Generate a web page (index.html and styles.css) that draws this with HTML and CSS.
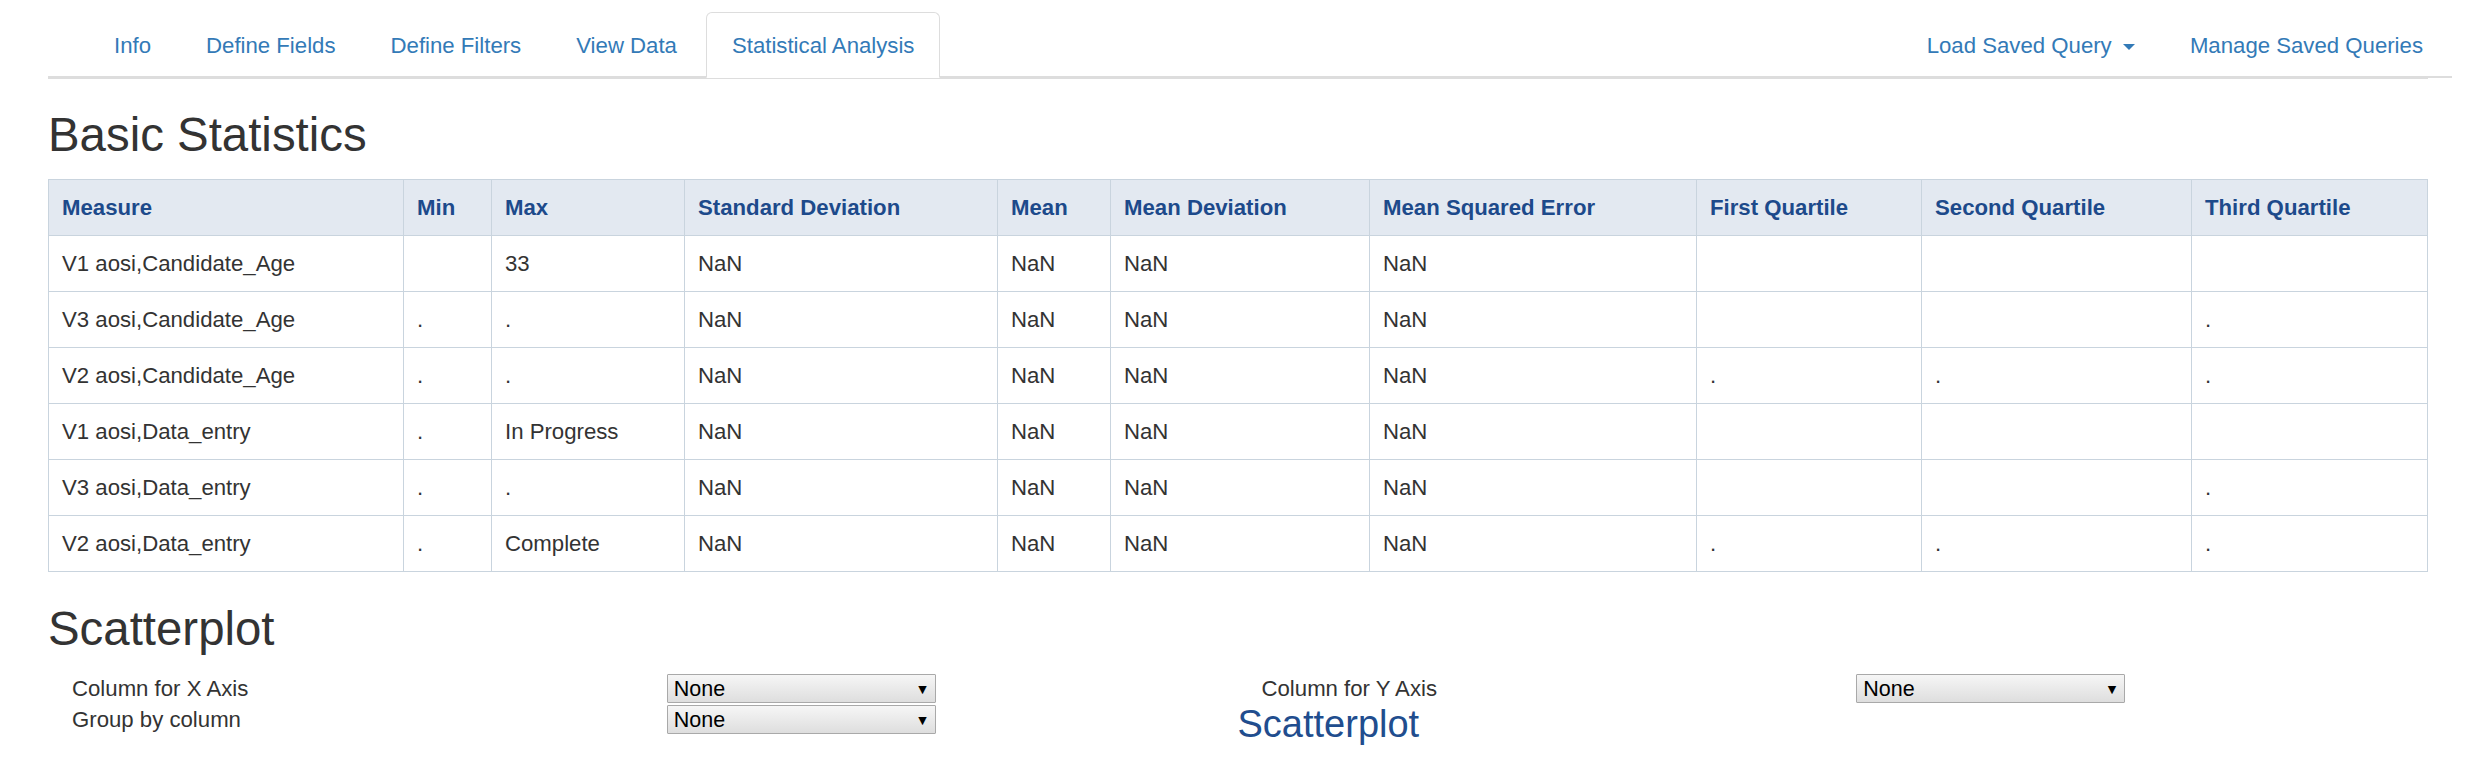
FILE: index.html
```html
<!DOCTYPE html>
<html lang="en">
<head>
<meta charset="utf-8">
<title>Statistical Analysis</title>
<link rel="stylesheet" href="styles.css">
</head>
<body>
<div class="page">
  <nav class="topnav">
    <ul class="tabs tabs-left">
      <li><a href="#">Info</a></li>
      <li><a href="#">Define Fields</a></li>
      <li><a href="#">Define Filters</a></li>
      <li><a href="#">View Data</a></li>
      <li class="active"><a href="#">Statistical Analysis</a></li>
    </ul>
    <ul class="tabs tabs-right">
      <li><a href="#">Load Saved Query <span class="caret"></span></a></li>
      <li><a href="#">Manage Saved Queries</a></li>
    </ul>
  </nav>

  <h2 class="section-title stats-title">Basic Statistics</h2>

  <table class="stats">
    <colgroup>
      <col class="w1"><col class="w2"><col class="w3"><col class="w4"><col class="w5">
      <col class="w6"><col class="w7"><col class="w8"><col class="w9"><col class="w10">
    </colgroup>
    <thead>
      <tr>
        <th>Measure</th><th>Min</th><th>Max</th><th>Standard Deviation</th><th>Mean</th>
        <th>Mean Deviation</th><th>Mean Squared Error</th><th>First Quartile</th><th>Second Quartile</th><th>Third Quartile</th>
      </tr>
    </thead>
    <tbody>
      <tr><td>V1 aosi,Candidate_Age</td><td></td><td>33</td><td>NaN</td><td>NaN</td><td>NaN</td><td>NaN</td><td></td><td></td><td></td></tr>
      <tr><td>V3 aosi,Candidate_Age</td><td>.</td><td>.</td><td>NaN</td><td>NaN</td><td>NaN</td><td>NaN</td><td></td><td></td><td>.</td></tr>
      <tr><td>V2 aosi,Candidate_Age</td><td>.</td><td>.</td><td>NaN</td><td>NaN</td><td>NaN</td><td>NaN</td><td>.</td><td>.</td><td>.</td></tr>
      <tr><td>V1 aosi,Data_entry</td><td>.</td><td>In Progress</td><td>NaN</td><td>NaN</td><td>NaN</td><td>NaN</td><td></td><td></td><td></td></tr>
      <tr><td>V3 aosi,Data_entry</td><td>.</td><td>.</td><td>NaN</td><td>NaN</td><td>NaN</td><td>NaN</td><td></td><td></td><td>.</td></tr>
      <tr><td>V2 aosi,Data_entry</td><td>.</td><td>Complete</td><td>NaN</td><td>NaN</td><td>NaN</td><td>NaN</td><td>.</td><td>.</td><td>.</td></tr>
    </tbody>
  </table>

  <h2 class="section-title scatter-title">Scatterplot</h2>

  <div class="scatter-form">
    <div class="cell label">Column for X Axis</div>
    <div class="cell"><span class="sel"><select><option>None</option></select></span></div>
    <div class="cell label">Column for Y Axis</div>
    <div class="cell"><span class="sel"><select><option>None</option></select></span></div>

    <div class="cell label">Group by column</div>
    <div class="cell"><span class="sel"><select><option>None</option></select></span></div>
    <h3 class="plot-title">Scatterplot</h3>
    <div class="cell"></div>
  </div>
</div>
</body>
</html>
```

FILE: styles.css
```css
html, body {
  margin: 0;
  background: #ffffff;
}

body {
  font-family: "Liberation Sans", Arial, sans-serif;
  font-size: 22.2px;
  color: #333333;
}

.page {
  padding: 0 53px 30px 48px;
}

/* ---------- top navigation ---------- */
.topnav {
  display: flex;
  align-items: flex-start;
  padding-top: 12px;
  margin-right: -1px;
  border-bottom: 1px solid #dddddd;
}

.tabs {
  list-style: none;
  margin: 0;
  padding: 0;
  display: flex;
  align-items: flex-start;
  height: 64px;
  border-bottom: 2px solid #dddddd;
}

.tabs-left {
  flex: 1;
  padding-left: 40px;
}

.tabs-right {
  margin-right: -24px;
}

.tabs li {
  margin-right: 3px;
  margin-bottom: -2px;
}

.tabs a {
  display: block;
  padding: 17px 25px 16px;
  line-height: 31px;
  border: 1px solid transparent;
  border-radius: 6px 6px 0 0;
  color: #337ab7;
  text-decoration: none;
  white-space: nowrap;
}

.tabs li.active a {
  background: #ffffff;
  border-color: #dddddd #dddddd transparent;
}

.caret {
  display: inline-block;
  width: 0;
  height: 0;
  margin-left: 5px;
  vertical-align: middle;
  border-top: 6px solid #337ab7;
  border-left: 6px solid transparent;
  border-right: 6px solid transparent;
}

/* ---------- headings ---------- */
.section-title {
  margin: 0;
  font-size: 47.4px;
  line-height: 52px;
  font-weight: normal;
  color: #333333;
}

.stats-title {
  margin-top: 29.5px;
  margin-bottom: 18.5px;
}

.scatter-title {
  margin-bottom: 18px;
}

/* ---------- statistics table ---------- */
.stats {
  width: 2379px;
  table-layout: fixed;
  border-collapse: collapse;
  margin-bottom: 31px;
}

.w1 { width: 355px; }
.w2 { width: 88px; }
.w3 { width: 193px; }
.w4 { width: 313px; }
.w5 { width: 113px; }
.w6 { width: 259px; }
.w7 { width: 327px; }
.w8 { width: 225px; }
.w9 { width: 270px; }
.w10 { width: 236px; }

.stats tr {
  height: 56px;
}

.stats th,
.stats td {
  border: 1px solid #c9d4de;
  padding: 0 10px 0 13px;
  text-align: left;
  vertical-align: middle;
  white-space: nowrap;
  overflow: hidden;
}

.stats th {
  background: #e3e9f1;
  color: #1d4a8b;
  font-weight: bold;
}

.stats td {
  color: #333333;
}

/* ---------- scatterplot form ---------- */
.scatter-form {
  display: grid;
  grid-template-columns: repeat(4, 1fr);
  grid-template-rows: 31px auto;
  width: 2379px;
}

.cell {
  display: flex;
  align-items: center;
  height: 31px;
  padding-left: 24px;
}

.label {
  color: #333333;
}

.sel {
  position: relative;
  display: inline-block;
  width: 269px;
  height: 29px;
}

.sel select {
  appearance: none;
  -webkit-appearance: none;
  width: 100%;
  height: 100%;
  margin: 0;
  padding: 0 24px 0 6px;
  border: 1px solid #a9a9a9;
  border-radius: 1px;
  background: linear-gradient(#f6f6f6, #dedede);
  font-family: "Liberation Sans", Arial, sans-serif;
  font-size: 21.5px;
  color: #000000;
}

.sel::after {
  content: "\25BC";
  position: absolute;
  right: 9px;
  top: 50%;
  transform: translateY(-50%);
  font-family: "DejaVu Sans", sans-serif;
  font-size: 11px;
  line-height: 11px;
  color: #000000;
  pointer-events: none;
}

.plot-title {
  margin: -1px 0 0 0;
  align-self: start;
  font-size: 38px;
  line-height: 42px;
  font-weight: normal;
  color: #214d8e;
  white-space: nowrap;
}
```
